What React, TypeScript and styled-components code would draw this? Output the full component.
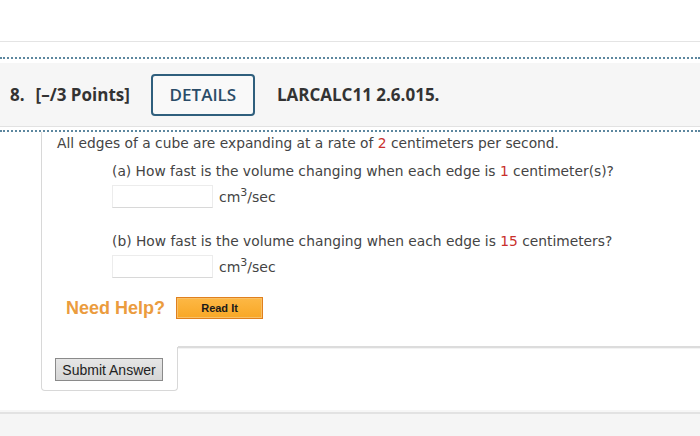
import React from 'react'
import styled, { createGlobalStyle } from 'styled-components'

const GlobalStyle = createGlobalStyle`
  html, body {
    margin: 0;
    padding: 0;
    background: #ffffff;
  }
  body {
    width: 700px;
    height: 436px;
    overflow: hidden;
  }
`

const Page = styled.div`
  width: 700px;
  height: 436px;
  display: flex;
  flex-direction: column;
`

const TopRule = styled.div`
  height: 41px;
  border-bottom: 1px solid #e4e4e4;
  flex-shrink: 0;
`

const HeaderWrap = styled.div`
  margin-top: 15px;
  border-top: 2px dotted #5c879f;
  border-bottom: 2px dotted #5c879f;
  padding: 4px 0 3px;
`

const HeaderBar = styled.div`
  height: 63px;
  background: #f6f6f6;
  border-bottom: 1px solid #e2e2e2;
  display: flex;
  align-items: center;
  padding-left: 10px;
  font-family: 'Open Sans', 'Liberation Sans', sans-serif;
  font-weight: 700;
  font-size: 17px;
  color: #333333;
`

const Number = styled.span`
  margin-right: 11px;
`

const DetailsButton = styled.div`
  margin-left: 21px;
  margin-right: 22px;
  width: 104px;
  height: 42px;
  box-sizing: border-box;
  border: 2px solid #2f5f7d;
  border-radius: 4px;
  display: flex;
  align-items: center;
  justify-content: center;
  color: #2a4c68;
  font-weight: 600;
  font-size: 17px;
  background: #f9f9f9;
`

const Panel = styled.div`
  margin-left: 41px;
  border-left: 1px solid #d8d8d8;
  padding: 2px 0 0 15px;
  height: 213px;
  font-family: 'DejaVu Sans', Verdana, sans-serif;
  font-size: 13.8px;
  color: #444444;
`

const Line = styled.div`
  line-height: 18px;
  white-space: nowrap;
`

const Part = styled.div<{ $top: number }>`
  margin-left: 55px;
  margin-top: ${p => p.$top}px;
`

const Red = styled.span`
  color: #c9302c;
`

const AnswerRow = styled.div`
  display: flex;
  align-items: center;
  margin-top: 5px;
`

const AnswerBox = styled.div`
  width: 101px;
  height: 23px;
  box-sizing: border-box;
  border: 1px solid #ececec;
  border-bottom-color: #d8d8d8;
  background: #ffffff;
`

const Unit = styled.span`
  margin-left: 6px;
  font-size: 14px;
  sup {
    font-size: 11px;
    line-height: 0;
  }
`

const HelpRow = styled.div`
  display: flex;
  align-items: center;
  margin-top: 19px;
  margin-left: 9px;
`

const NeedHelp = styled.span`
  font-family: 'Liberation Sans', Arial, sans-serif;
  font-weight: 700;
  font-size: 18px;
  color: #eb9c3e;
  margin-right: 11px;
`

const ReadIt = styled.div`
  width: 87px;
  height: 22px;
  box-sizing: border-box;
  border: 1px solid #e0801e;
  box-shadow: inset 0 0 0 1px #f9c066;
  background: linear-gradient(#fdb845, #f8a726);
  display: flex;
  align-items: center;
  justify-content: center;
  font-family: 'Liberation Sans', Arial, sans-serif;
  font-weight: 700;
  font-size: 11px;
  color: #1a1a1a;
`

const BottomRow = styled.div`
  display: flex;
  margin-left: 41px;
`

const SubmitTab = styled.div`
  width: 137px;
  height: 44px;
  box-sizing: border-box;
  border: 1px solid #d8d8d8;
  border-top: none;
  border-radius: 0 0 4px 4px;
  padding: 11px 0 0 13px;
`

const Rest = styled.div`
  flex: 1;
  border-top: 2px solid #dcdcdc;
  box-shadow: inset 0 1px 0 #f3f3f3;
  height: 10px;
  margin-top: -1px;
`

const SubmitButton = styled.div`
  width: 108px;
  height: 23px;
  box-sizing: border-box;
  border: 1px solid #8a8a8a;
  background: linear-gradient(#e6e6e6, #d6d6d6);
  display: flex;
  align-items: center;
  justify-content: center;
  font-family: 'Liberation Sans', Arial, sans-serif;
  font-size: 14px;
  color: #222222;
`

const Footer = styled.div`
  margin-top: 21px;
  flex: 1;
  background: #f5f5f5;
  border-top: 2px solid #e2e2e2;
  box-shadow: 0 -2px 0 #f6f6f6;
`

const AnswerLine = () => (
  <AnswerRow>
    <AnswerBox />
    <Unit>
      cm<sup>3</sup>/sec
    </Unit>
  </AnswerRow>
)

const App = () => {
  return (
    <Page>
      <GlobalStyle />
      <TopRule />
      <HeaderWrap>
        <HeaderBar>
          <Number>8.</Number>
          <span>[–/3 Points]</span>
          <DetailsButton>DETAILS</DetailsButton>
          <span>LARCALC11 2.6.015.</span>
        </HeaderBar>
      </HeaderWrap>
      <Panel>
        <Line>
          All edges of a cube are expanding at a rate of <Red>2</Red> centimeters per second.
        </Line>
        <Part $top={10}>
          <Line>
            (a) How fast is the volume changing when each edge is <Red>1</Red> centimeter(s)?
          </Line>
          <AnswerLine />
        </Part>
        <Part $top={24}>
          <Line>
            (b) How fast is the volume changing when each edge is <Red>15</Red> centimeters?
          </Line>
          <AnswerLine />
        </Part>
        <HelpRow>
          <NeedHelp>Need Help?</NeedHelp>
          <ReadIt>Read It</ReadIt>
        </HelpRow>
      </Panel>
      <BottomRow>
        <SubmitTab>
          <SubmitButton>Submit Answer</SubmitButton>
        </SubmitTab>
        <Rest />
      </BottomRow>
      <Footer />
    </Page>
  )
}

export default App
